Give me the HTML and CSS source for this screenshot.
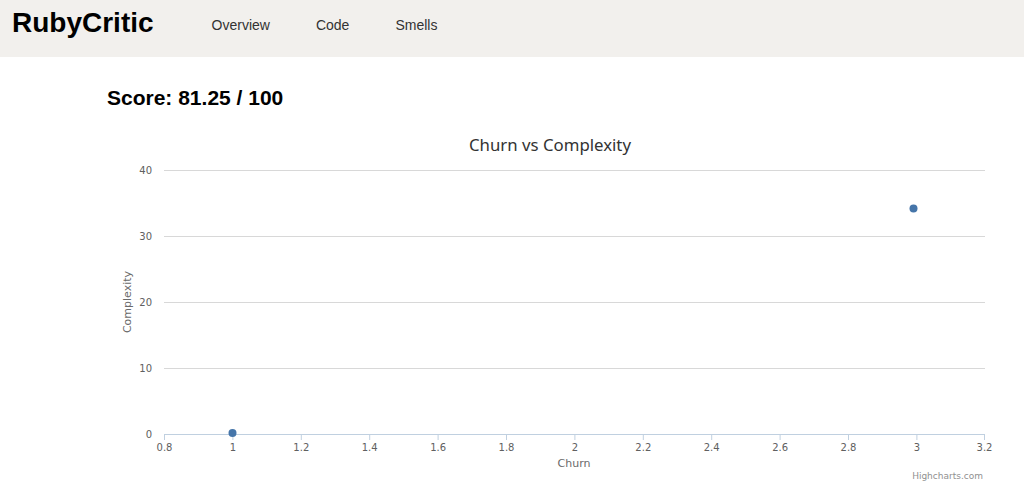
FILE: index.html
```html
<!DOCTYPE html>
<html>
<head>
<meta charset="utf-8">
<title>RubyCritic</title>
<link rel="stylesheet" href="styles.css">
</head>
<body>
<header class="topbar">
  <a class="logo" href="#">RubyCritic</a>
  <nav class="nav">
    <a href="#">Overview</a>
    <a href="#">Code</a>
    <a href="#">Smells</a>
  </nav>
</header>
<main class="content">
  <h2 class="score">Score: 81.25 / 100</h2>
  <div class="chart">
    <svg width="900" height="369" viewBox="0 0 900 369" xmlns="http://www.w3.org/2000/svg">
      <text class="title" x="450" y="26" text-anchor="middle">Churn vs Complexity</text>
      <g class="grid">
        <line x1="64" y1="45.5" x2="885" y2="45.5"/>
        <line x1="64" y1="111.5" x2="885" y2="111.5"/>
        <line x1="64" y1="177.5" x2="885" y2="177.5"/>
        <line x1="64" y1="243.5" x2="885" y2="243.5"/>
      </g>
      <g class="ylabels" text-anchor="end">
        <text x="52" y="49">40</text>
        <text x="52" y="115">30</text>
        <text x="52" y="181">20</text>
        <text x="52" y="247">10</text>
        <text x="52" y="313">0</text>
      </g>
      <line class="axis" x1="64" y1="309.5" x2="885" y2="309.5"/>
      <g class="ticks">
        <line x1="64.5" y1="309" x2="64.5" y2="315"/>
        <line x1="132.9" y1="309" x2="132.9" y2="315"/>
        <line x1="201.3" y1="309" x2="201.3" y2="315"/>
        <line x1="269.7" y1="309" x2="269.7" y2="315"/>
        <line x1="338.1" y1="309" x2="338.1" y2="315"/>
        <line x1="406.5" y1="309" x2="406.5" y2="315"/>
        <line x1="474.9" y1="309" x2="474.9" y2="315"/>
        <line x1="543.3" y1="309" x2="543.3" y2="315"/>
        <line x1="611.7" y1="309" x2="611.7" y2="315"/>
        <line x1="680.1" y1="309" x2="680.1" y2="315"/>
        <line x1="748.5" y1="309" x2="748.5" y2="315"/>
        <line x1="816.9" y1="309" x2="816.9" y2="315"/>
        <line x1="884.5" y1="309" x2="884.5" y2="315"/>
      </g>
      <g class="xlabels" text-anchor="middle">
        <text x="64.5" y="326">0.8</text>
        <text x="132.9" y="326">1</text>
        <text x="201.3" y="326">1.2</text>
        <text x="269.7" y="326">1.4</text>
        <text x="338.1" y="326">1.6</text>
        <text x="406.5" y="326">1.8</text>
        <text x="474.9" y="326">2</text>
        <text x="543.3" y="326">2.2</text>
        <text x="611.7" y="326">2.4</text>
        <text x="680.1" y="326">2.6</text>
        <text x="748.5" y="326">2.8</text>
        <text x="816.9" y="326">3</text>
        <text x="884.5" y="326">3.2</text>
      </g>
      <text class="axis-title" x="474" y="342" text-anchor="middle">Churn</text>
      <text class="axis-title" x="31" y="177" text-anchor="middle" transform="rotate(-90 31 177)">Complexity</text>
      <g class="points">
        <circle cx="132.5" cy="308" r="4"/>
        <circle cx="813.5" cy="83.5" r="4"/>
      </g>
      <text class="credits" x="883" y="354" text-anchor="end">Highcharts.com</text>
    </svg>
  </div>
</main>
</body>
</html>
```
FILE: styles.css
```css
html, body {
  margin: 0;
  padding: 0;
  background: #ffffff;
  font-family: "Liberation Sans", Arial, Helvetica, sans-serif;
  color: #000;
}

.topbar {
  height: 57px;
  background: #f2f0ed;
  display: flex;
  align-items: flex-start;
  padding-left: 12px;
  box-sizing: border-box;
}

.logo {
  font-size: 28px;
  font-weight: bold;
  color: #000;
  text-decoration: none;
  line-height: 32px;
  margin-top: 7px;
}

.nav {
  display: flex;
  gap: 46px;
  margin-left: 58px;
  margin-top: 16px;
}

.nav a {
  font-size: 14px;
  line-height: 18px;
  color: #333;
  text-decoration: none;
}

.content {
  padding-left: 100px;
}

.score {
  margin: 0;
  padding: 29px 0 0 7px;
  height: 39px;
  font-size: 21px;
  line-height: 24px;
  font-weight: bold;
  color: #000;
}

.chart {
  display: block;
  height: 369px;
}

.chart svg {
  display: block;
  font-family: "DejaVu Sans", "Lucida Grande", sans-serif;
}

.title {
  font-family: "Noto Sans", "DejaVu Sans", sans-serif;
  font-size: 16.8px;
  fill: #333;
}

.grid line {
  stroke: #d8d8d8;
  stroke-width: 1;
}

.axis {
  stroke: #c0d0e0;
  stroke-width: 1;
}

.ticks line {
  stroke: #c0d0e0;
  stroke-width: 1;
}

.ylabels text,
.xlabels text {
  font-size: 10px;
  fill: #606060;
}

.axis-title {
  font-size: 11px;
  fill: #6a6a6a;
}

.points circle {
  fill: #4575a9;
}

.credits {
  font-size: 9px;
  fill: #909090;
}
```
